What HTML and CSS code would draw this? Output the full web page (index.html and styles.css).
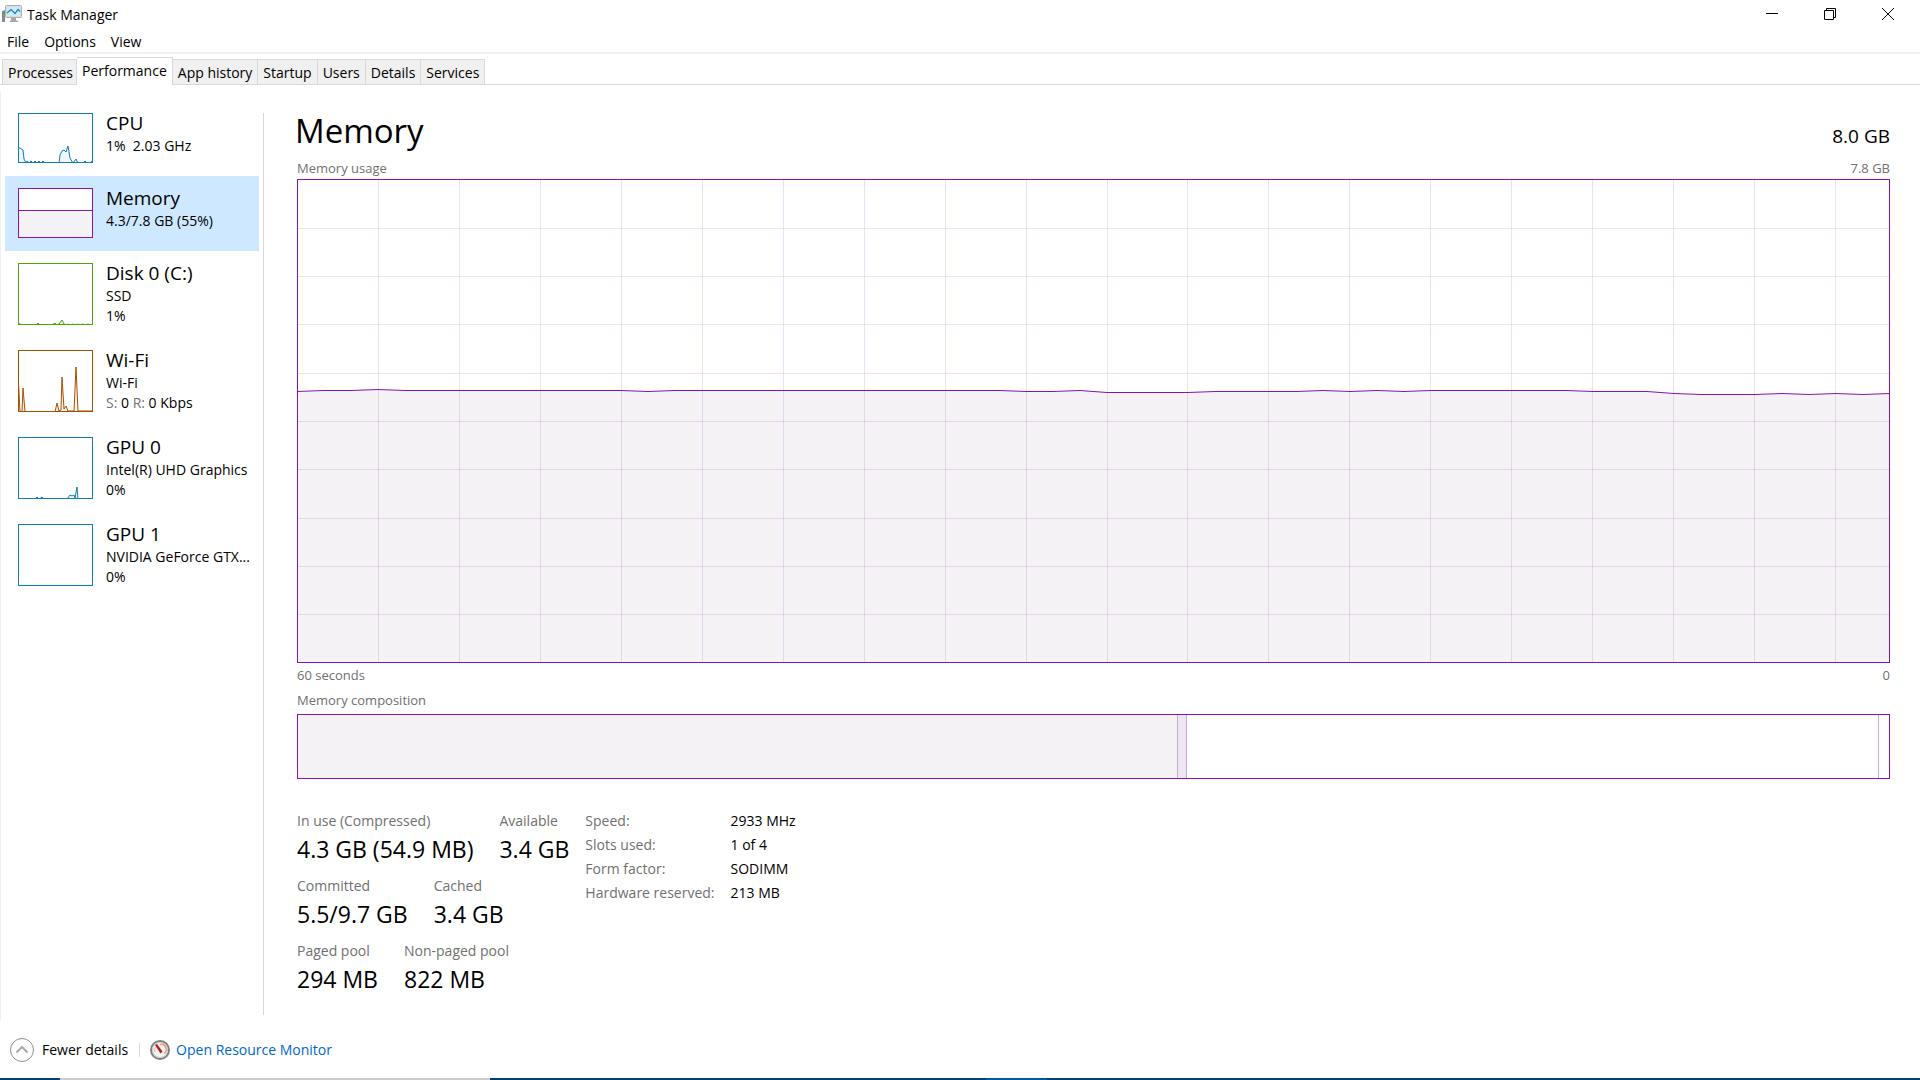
FILE: index.html
```html
<!DOCTYPE html>
<html lang="en">
<head>
<meta charset="utf-8">
<title>Task Manager</title>
<link rel="stylesheet" href="styles.css">
</head>
<body>
<div class="window">
  <header class="titlebar">
    <svg class="app-icon" viewBox="0 0 20 18" aria-hidden="true">
      <path d="M0 6l3-1v12H0z" fill="#8a8a8a"/>
      <path d="M1 7h2v2H1z" fill="#3fae3a"/>
      <path d="M9 13h5v2l3 2H7l2-2z" fill="#a9a9a9"/>
      <rect x="3.5" y=".5" width="16" height="12" rx="1" fill="#dcdcdc" stroke="#b0b0b0"/>
      <rect x="5" y="2" width="13" height="9" fill="#c9ebfb"/>
      <path d="M5 8l4-3.500 4 4 3-4 2 2" fill="none" stroke="#1b7fb5" stroke-width="1.200"/>
    </svg>
    <span class="title">Task Manager</span>
    <div class="window-buttons">
      <button type="button" aria-label="Minimize"><svg viewBox="0 0 12 12"><path d="M0 5.500h12"/></svg></button>
      <button type="button" aria-label="Restore"><svg viewBox="0 0 12 12"><path d="M.5 2.500h9v9h-9zM2.500 2.500v-2h9v9h-2"/></svg></button>
      <button type="button" aria-label="Close"><svg viewBox="0 0 12 12"><path d="M0 0l12 12M12 0L0 12"/></svg></button>
    </div>
  </header>
  <nav class="menubar" aria-label="Menu">
    <button type="button">File</button>
    <button type="button">Options</button>
    <button type="button">View</button>
  </nav>
  <nav class="tabs" aria-label="Tabs">
    <button type="button">Processes</button>
    <button type="button" class="active">Performance</button>
    <button type="button">App history</button>
    <button type="button">Startup</button>
    <button type="button">Users</button>
    <button type="button">Details</button>
    <button type="button">Services</button>
  </nav>
  <div class="content">
    <aside class="sidebar">
      <button type="button" class="resource">
        <svg class="mini blue" viewBox="0 0 73 48"><path class="area" d="M-1 49V34h2l3 2 1 9 2 4 1-2 2 2 2-2 2 2 2-2 2 2 2-2 2 2 2-2 2 2h14l1-8 2-4 2-1 2 2 2-6 2 12 3 5 3-4 2 4h5l2-2 2 2h3l2-2 2 2"/></svg>
        <span class="info"><span class="name">CPU</span><span class="detail">1%&nbsp; 2.03 GHz</span></span>
      </button>
      <button type="button" class="resource selected">
        <svg class="mini purple" viewBox="0 0 73 48"><path class="area" d="M-2 50V21.500H75V50z"/></svg>
        <span class="info"><span class="name">Memory</span><span class="detail">4.3/7.8 GB (55%)</span></span>
      </button>
      <button type="button" class="resource tall">
        <svg class="mini green" viewBox="0 0 73 60"><path class="area" d="M-1 61v-2l2 1 2 1h14l2-2 2 2h12l3-2 2 2 2-1 3-4 2 4 2 1 2-1 2 1 3-1 2 1 3-1 2 1 3-1 2 1 3-1 2 1"/></svg>
        <span class="info"><span class="name">Disk 0 (C:)</span><span class="detail">SSD</span><span class="detail">1%</span></span>
      </button>
      <button type="button" class="resource tall">
        <svg class="mini brown" viewBox="0 0 73 60"><path class="area" d="M-1 61V22l2 39h2l1-24 2 24h30l2-9 2 8 2-1 1-33 2 32 2-3 2 5h6l2-44 2 44h14"/></svg>
        <span class="info"><span class="name">Wi-Fi</span><span class="detail">Wi-Fi</span><span class="detail"><i>S:</i> 0 <i>R:</i> 0 Kbps</span></span>
      </button>
      <button type="button" class="resource tall">
        <svg class="mini blue" viewBox="0 0 73 60"><path class="area" d="M-1 61v-2l2 2h15l2-2 2 2 3-2 2 2h23l3-4 2 1 2-1 1 3 2-11 1 12h4l1-1 1 1h8"/></svg>
        <span class="info"><span class="name">GPU 0</span><span class="detail">Intel(R) UHD Graphics</span><span class="detail">0%</span></span>
      </button>
      <button type="button" class="resource tall">
        <svg class="mini blue" viewBox="0 0 73 60"></svg>
        <span class="info"><span class="name">GPU 1</span><span class="detail">NVIDIA GeForce GTX...</span><span class="detail">0%</span></span>
      </button>
    </aside>
    <main class="panel">
      <div class="heading"><h1>Memory</h1><span class="total">8.0 GB</span></div>
      <div class="caption"><span>Memory usage</span><span>7.8 GB</span></div>
      <svg class="chart" viewBox="0 0 1593 484" preserveAspectRatio="none" role="img" aria-label="Memory usage">
        <path class="fill" d="M0 484V212.500l27-1h27l27-1 27 1H324l27 1 27-1H702l27 1h27l27-1 27 2H891l27-1H999l27-1 27 1 27-1 27 1 27-1H1269l27 1H1350l27 2 27 1H1458l27-1 27 1 27-1 27 1 27-1V484z"/>
        <path class="grid" d="M81.500 0v484M162.500 0v484M243.500 0v484M324.500 0v484M405.500 0v484M486.500 0v484M567.500 0v484M648.500 0v484M729.500 0v484M810.500 0v484M890.500 0v484M971.500 0v484M1052.500 0v484M1133.500 0v484M1214.500 0v484M1295.500 0v484M1376.500 0v484M1457.500 0v484M1538.500 0v484M0 49.500h1593M0 97.500h1593M0 145.500h1593M0 194.500h1593M0 242.500h1593M0 290.500h1593M0 339.500h1593M0 387.500h1593M0 435.500h1593"/>
        <path class="line" d="M0 212.500l27-1h27l27-1 27 1H324l27 1 27-1H702l27 1h27l27-1 27 2H891l27-1H999l27-1 27 1 27-1 27 1 27-1H1269l27 1H1350l27 2 27 1H1458l27-1 27 1 27-1 27 1 27-1"/>
        <rect class="frame" x=".5" y=".5" width="1592" height="483"/>
      </svg>
      <div class="caption axis"><span>60 seconds</span><span>0</span></div>
      <div class="caption composition-label"><span>Memory composition</span></div>
      <div class="composition">
        <span class="in-use"></span><span class="modified"></span><span class="standby"></span><span class="free"></span>
      </div>
      <div class="stats">
        <div class="figures">
          <dl class="pairs"><div><dt>In use (Compressed)</dt><dd>4.3 GB (54.9 MB)</dd></div><div><dt>Available</dt><dd>3.4 GB</dd></div></dl>
          <dl class="pairs"><div><dt>Committed</dt><dd>5.5/9.7 GB</dd></div><div><dt>Cached</dt><dd>3.4 GB</dd></div></dl>
          <dl class="pairs"><div><dt>Paged pool</dt><dd>294 MB</dd></div><div><dt>Non-paged pool</dt><dd>822 MB</dd></div></dl>
        </div>
        <table class="specs">
          <tr><th scope="row">Speed:</th><td>2933 MHz</td></tr>
          <tr><th scope="row">Slots used:</th><td>1 of 4</td></tr>
          <tr><th scope="row">Form factor:</th><td>SODIMM</td></tr>
          <tr><th scope="row">Hardware reserved:</th><td>213 MB</td></tr>
        </table>
      </div>
    </main>
  </div>
  <footer class="footer">
    <button type="button" class="fewer">
      <svg viewBox="0 0 24 24" aria-hidden="true"><circle cx="12" cy="12" r="11.500" fill="none" stroke="#8e8e8e"/><path d="M6.500 14.500L12 9l5.500 5.500" fill="none" stroke="#a8a8a8" stroke-width="2"/></svg>
      Fewer details
    </button>
    <a class="monitor" href="#">
      <svg viewBox="0 0 20 20" aria-hidden="true"><circle cx="10" cy="10" r="9" fill="#f4f4f4" stroke="#808080" stroke-width="2"/><circle cx="10" cy="10" r="7.500" fill="none" stroke="#c9c9c9"/><path d="M5 12a5 5 0 0 1 2-6" fill="none" stroke="#bbb"/><path d="M10 4.500a5 5 0 0 1 4 9" fill="none" stroke="#e8a070" stroke-width="1.500"/><path d="M5 5l2-1 5.500 7.500-2 2z" fill="#c4161c"/></svg>
      Open Resource Monitor
    </a>
  </footer>
  <div class="taskbar"><span class="open-window"></span><span class="running"></span></div>
</div>
</body>
</html>
```

FILE: styles.css
```css
* { box-sizing: border-box; }
html, body { height: 100%; }
body { margin: 0; background: #fff; color: #000; font: 14px/20px "Open Sans", "Noto Sans", sans-serif; }
button { border: 0; padding: 0; background: none; color: inherit; font: inherit; text-align: left; }
h1, dl, dd { margin: 0; font-weight: 400; }
svg { display: block; flex: none; }
.window { display: flex; flex-direction: column; min-height: 100%; }

.titlebar { display: flex; align-items: center; height: 28px; padding: 0 3px 0 2px; }
.app-icon { width: 20px; height: 18px; }
.title { margin-left: 5px; padding-top: 2px; }
.window-buttons { display: flex; margin-left: auto; }
.window-buttons button { display: flex; justify-content: center; align-items: center; width: 58px; height: 28px; }
.window-buttons svg { width: 12px; height: 12px; fill: none; stroke: #000; }

.menubar { display: flex; gap: 15px; height: 26px; padding: 4px 7px 0; border-bottom: 2px solid #f0f0f0; }
.tabs { display: flex; align-items: flex-end; height: 31px; padding-left: 2px; border-bottom: 1px solid #d9d9d9; }
.tabs button { height: 25px; padding: 2px 5px 0; border: 1px solid #d9d9d9; border-width: 1px 1px 0 0; background: #f0f0f0; }
.tabs button:first-child { padding-right: 3px; border-left-width: 1px; }
.tabs .active { height: 28px; margin-bottom: -1px; padding: 0 5px 1px; background: #fff; }

.content { display: flex; flex: 1; margin-top: 7px; border-left: 1px solid #f0f0f0; }
.sidebar { flex: none; width: 263px; margin: 21px 0 5px; padding-left: 4px; border-right: 1px solid #d9d9d9; }
.resource { display: flex; gap: 13px; width: 254px; height: 75px; padding: 12px 0 0 13px; }
.resource:first-child { height: 63px; padding-top: 0; }
.resource.tall { height: 87px; }
.selected { background: #cde8ff; }
.mini { width: 75px; height: 50px; border: 1px solid; background: #fff; }
.tall .mini { height: 62px; }
.mini .area { stroke: currentColor; fill: #f1f6fa; }
.blue { color: #117dbb; }
.purple { color: #8b12ae; }
.purple .area { fill: #f4f2f4; }
.green { color: #4da60c; }
.brown { color: #a74f01; }
.brown .area { fill: #fcf3eb; }
.info { display: flex; flex-direction: column; white-space: nowrap; }
.name { padding-bottom: 3px; font-size: 19px; line-height: 20px; }
.detail { line-height: 20px; }
.detail i { color: #707070; font-style: normal; }

.panel { flex: 1; min-width: 0; padding: 12px 30px 0 33px; }
.heading { display: flex; justify-content: space-between; align-items: flex-end; height: 55px; margin-left: -2px; }
h1 { font-size: 33px; line-height: 56px; }
.total { font-size: 19px; line-height: 46px; }
.caption { display: flex; justify-content: space-between; padding-bottom: 2px; color: #707070; font-size: 13px; line-height: 18px; }
.chart { width: 100%; height: 484px; }
.fill { fill: #f4f2f4; }
.grid { fill: none; stroke: #8b12ae; stroke-opacity: .13; }
.line, .frame { fill: none; stroke: #8b12ae; }
.axis { margin-top: 3px; }
.composition-label { margin-top: 5px; }
.composition { display: flex; height: 65px; margin-top: 3px; border: 1px solid #8b12ae; }
.in-use { flex: 881; background: #f4f2f4; }
.modified { flex: 8; border: 1px solid #c9a9d8; border-width: 0 1px; background: #eee6f2; }
.standby { flex: 692; }
.free { flex: 10; border-left: 1px solid #c9a9d8; }
.stats { display: flex; gap: 16px; margin-top: 32px; }
.pairs { display: flex; gap: 26px; height: 65px; white-space: nowrap; }
dt { color: #707070; }
dd { font-size: 23px; line-height: 36px; }
.specs { align-self: flex-start; border-collapse: collapse; }
.specs th { padding: 0 16px 4px 0; color: #707070; font-weight: 400; text-align: left; }
.specs td { padding: 0 0 4px; }

.footer { display: flex; align-items: center; height: 58px; padding: 2px 0 0 10px; }
.fewer, .monitor { display: flex; align-items: center; }
.fewer { gap: 8px; }
.fewer svg { width: 24px; height: 24px; }
.monitor { gap: 6px; height: 14px; margin-left: 11px; padding-left: 10px; border-left: 1px solid #d9d9d9; color: #0066cc; text-decoration: none; }
.monitor svg { width: 20px; height: 20px; }
.taskbar { display: flex; height: 2px; padding-left: 60px; background: #004275; }
.open-window { width: 430px; background: #ccc; }
.running { width: 61px; margin-left: 496px; background: #005a9e; }
```
